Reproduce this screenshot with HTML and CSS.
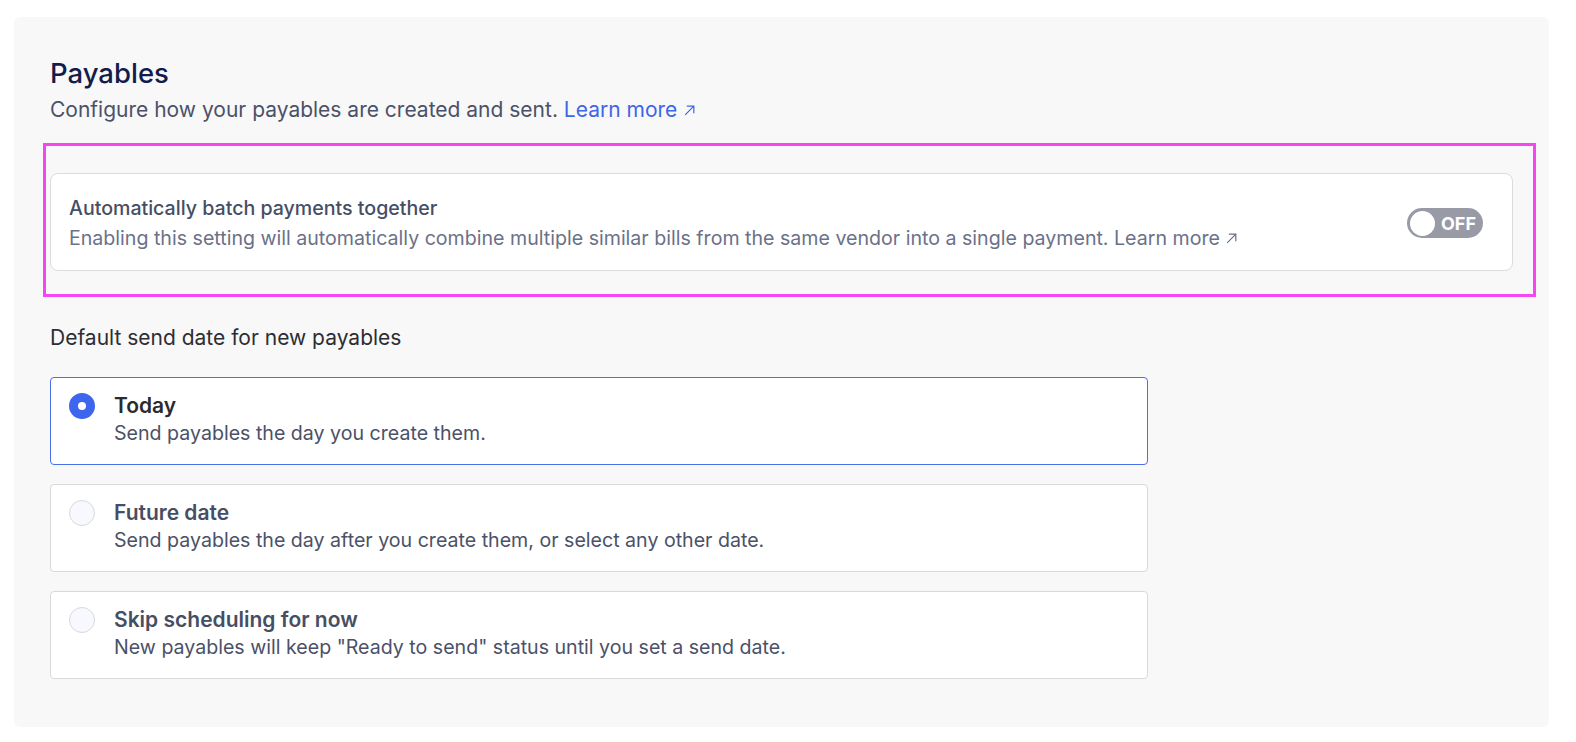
FILE: index.html
```html
<!DOCTYPE html>
<html lang="en">
<head>
    <meta charset="UTF-8">
    <meta name="viewport" content="width=device-width, initial-scale=1.0">
    <title>Payables settings</title>
    <link rel="stylesheet" href="styles.css">
</head>
<body>

<div class="panel">
    <!-- Header -->
    <h2 class="panel-title">Payables</h2>
    <p class="panel-subtitle">
        Configure how your payables are created and sent.
        <a href="#" class="link">Learn more <svg class="ext" viewBox="0 0 12 12"><path d="M2 10L10 2M3.5 2h6.5v6.5"/></svg></a>
    </p>

    <!-- Batch setting (highlighted) -->
    <div class="highlight">
        <div class="setting">
            <div class="setting-text">
                <div class="setting-title">Automatically batch payments together</div>
                <div class="setting-desc">
                    Enabling this setting will automatically combine multiple similar bills from the same vendor into a single payment.
                    <a href="#" class="link-muted">Learn more <svg class="ext" viewBox="0 0 12 12"><path d="M2 10L10 2M3.5 2h6.5v6.5"/></svg></a>
                </div>
            </div>
            <div class="toggle">
                <span class="knob"></span>
                <span class="toggle-label">OFF</span>
            </div>
        </div>
    </div>

    <!-- Send date options -->
    <div class="group-label">Default send date for new payables</div>

    <div class="options">
        <label class="option selected">
            <span class="radio"></span>
            <span class="option-text">
                <span class="option-title">Today</span>
                <span class="option-desc">Send payables the day you create them.</span>
            </span>
        </label>
        <label class="option">
            <span class="radio"></span>
            <span class="option-text">
                <span class="option-title">Future date</span>
                <span class="option-desc">Send payables the day after you create them, or select any other date.</span>
            </span>
        </label>
        <label class="option">
            <span class="radio"></span>
            <span class="option-text">
                <span class="option-title">Skip scheduling for now</span>
                <span class="option-desc">New payables will keep "Ready to send" status until you set a send date.</span>
            </span>
        </label>
    </div>
</div>

</body>
</html>
```

FILE: styles.css
```css
body {
    margin: 0;
    background: #fff;
    font-family: 'Inter', 'Noto Sans', sans-serif;
    color: #2b2b30;
}
.panel {
    margin: 17px 27px 15px 14px;
    padding: 39px 36px 48px 36px;
    background: #f8f8f8;
    border-radius: 6px;
}
.panel-title {
    margin: 0;
    font-size: 27.5px;
    line-height: 34px;
    font-weight: 500;
    color: #131c4b;
}
.panel-subtitle {
    margin: 6px 0 0;
    font-size: 21px;
    line-height: 28px;
    color: #4b5168;
}
.link {
    color: #3e66e6;
    text-decoration: none;
}
.link-muted {
    color: #6a7189;
    text-decoration: none;
}
.ext {
    width: 13px;
    height: 13px;
    fill: none;
    stroke: currentColor;
    stroke-width: 1.1;
    vertical-align: 0;
}

/* highlighted block */
.highlight {
    margin: 19px -23px 0 -7px;
    padding: 27px 20px 23px 4px;
    border: 3px solid #f646f2;
}
.setting {
    display: flex;
    align-items: center;
    justify-content: space-between;
    padding: 22px 29px 20px 18px;
    background: #fff;
    border: 1px solid #dcdcdc;
    border-radius: 8px;
}
.setting-text {
    display: flex;
    flex-direction: column;
    gap: 6px;
}
.setting-title {
    font-size: 19.6px;
    line-height: 24px;
    font-weight: 500;
    color: #474e63;
}
.setting-desc {
    font-size: 19.6px;
    line-height: 24px;
    color: #6a7189;
}
.toggle {
    display: flex;
    align-items: center;
    gap: 6px;
    width: 76px;
    height: 30px;
    box-sizing: border-box;
    padding: 0 3px;
    background: #989ba6;
    border-radius: 15px;
}
.knob {
    width: 25px;
    height: 25px;
    border-radius: 50%;
    background: #fff;
}
.toggle-label {
    color: #fff;
    font-size: 18px;
    font-weight: 700;
}

/* send date options */
.group-label {
    margin-top: 27px;
    font-size: 21px;
    line-height: 28px;
    color: #2d2d33;
}
.options {
    display: flex;
    flex-direction: column;
    gap: 19px;
    margin-top: 25px;
    max-width: 1098px;
}
.option {
    display: flex;
    gap: 19px;
    padding: 14px 20px 19px 18px;
    background: #fff;
    border: 1px solid #d9d9d9;
    border-radius: 4px;
    cursor: pointer;
}
.option.selected {
    border-color: #4a6ee8;
}
.radio {
    flex: none;
    width: 26px;
    height: 26px;
    margin-top: 1px;
    box-sizing: border-box;
    border-radius: 50%;
    border: 1px solid #d8d8de;
    background: #f8f9fe;
}
.option.selected .radio {
    border: 9px solid #3d65ee;
    background: #fff;
}
.option-text {
    display: flex;
    flex-direction: column;
    gap: 1px;
}
.option-title {
    font-size: 21px;
    line-height: 28px;
    font-weight: 600;
    color: #474e63;
}
.option.selected .option-title {
    color: #2a2a2f;
}
.option-desc {
    font-size: 19.6px;
    line-height: 24px;
    color: #4b5168;
}
```
